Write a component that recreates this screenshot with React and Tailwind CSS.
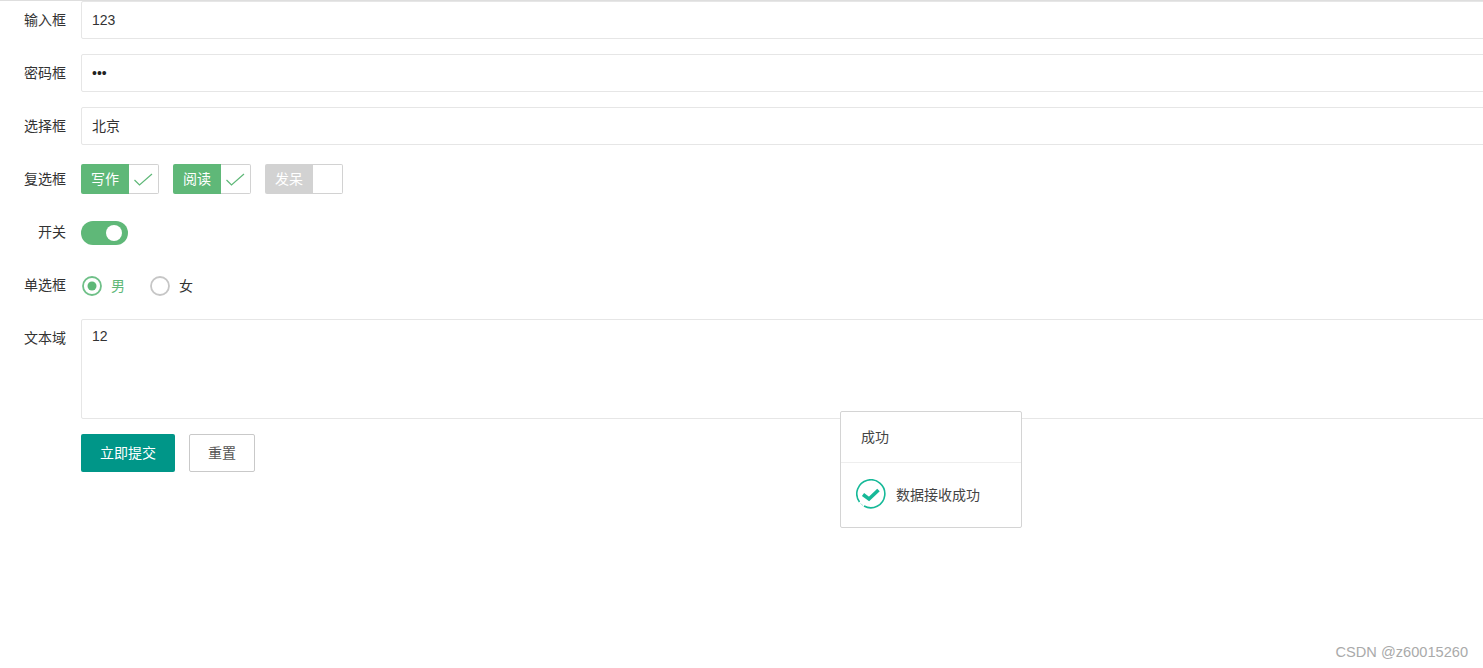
import React from "react";

const font = "font-['Liberation_Sans','Noto_Sans_CJK_SC',sans-serif]";

function Row({ label, children, h = "h-[38px]" }) {
  return (
    <div className={`flex ${h}`}>
      <div className="w-[81px] shrink-0 pr-[15px] text-right text-sm leading-[38px] text-[#333]">{label}</div>
      {children}
    </div>
  );
}

function Field({ children }) {
  return (
    <div className="h-[38px] w-[1420px] shrink-0 rounded-[2px] border border-[#e6e6e6] bg-white pl-[10px] text-sm leading-[36px] text-[#333]">
      {children}
    </div>
  );
}

function Check({ label, checked = true }) {
  return (
    <div className="flex h-[30px] w-[78px] bg-white">
      <div className={`flex h-[30px] w-[48px] shrink-0 items-center justify-center rounded-l-[2px] text-sm ${checked ? "bg-[#5fb878]" : "bg-[#d2d2d2]"} text-white`}>
        {label}
      </div>
      <div className="flex h-[30px] flex-1 items-center justify-center rounded-r-[2px] border border-l-0 border-[#d2d2d2] pr-[2px]">
        {checked && (
          <svg width="20" height="16" viewBox="0 0 20 16" fill="none">
            <path d="M1.5 9 L6.5 14 L19 3" stroke="#5fb878" strokeWidth="1.2" />
          </svg>
        )}
      </div>
    </div>
  );
}

function Radio({ checked, label }) {
  const color = checked ? "#6fc088" : "#c6c6c6";
  return (
    <div className="flex items-center gap-[9px]">
      <svg width="20" height="20" viewBox="0 0 20 20" fill="none" className="shrink-0">
        <circle cx="10" cy="10" r="9" stroke={color} strokeWidth="1.8" />
        {checked && <circle cx="10" cy="10" r="4.5" fill="#5fb878" />}
      </svg>
      <span className={`text-sm ${checked ? "text-[#5fb878]" : "text-[#333]"}`}>{label}</span>
    </div>
  );
}

export default function App() {
  return (
    <div className={`relative h-[668px] w-full overflow-hidden bg-white ${font}`}>
      <div className="flex flex-col gap-[15px] border-t border-[#dedede]">
        <Row label="输入框"><Field>123</Field></Row>
        <Row label="密码框">
          <Field>
            <span className="text-sm text-[#222]">•••</span>
          </Field>
        </Row>
        <Row label="选择框"><Field>北京</Field></Row>
        <Row label="复选框">
          <div className="flex items-center gap-[14px]">
            <Check label="写作" />
            <Check label="阅读" />
            <Check label="发呆" checked={false} />
          </div>
        </Row>
        <Row label="开关">
          <div className="flex items-center pt-[2px]">
            <div className="flex h-[24px] w-[47px] items-center justify-end rounded-full bg-[#5fb878] pr-[6px]">
              <div className="h-4 w-4 rounded-full bg-white" />
            </div>
          </div>
        </Row>
        <Row label="单选框">
          <div className="ml-px flex items-center gap-[25px] pt-[2px]">
            <Radio checked label="男" />
            <Radio label="女" />
          </div>
        </Row>
        <Row label="文本域" h="h-[100px]">
          <div className="h-[100px] w-[1420px] shrink-0 rounded-[2px] border border-[#e6e6e6] bg-white py-[6px] pl-[10px] text-sm leading-5 text-[#333]">
            12
          </div>
        </Row>
        <div className="flex h-[38px] gap-[14px] pl-[81px]">
          <button className="h-[38px] w-[94px] rounded-[2px] bg-[#009688] text-sm text-white">立即提交</button>
          <button className="h-[38px] w-[66px] rounded-[2px] border border-[#c9c9c9] bg-white text-sm text-[#555]">重置</button>
        </div>
      </div>

      <div className="absolute left-[840px] top-[411px] h-[117px] w-[182px] rounded-[2px] border border-[#d4d4d4] bg-white">
        <div className="h-[51px] border-b border-[#eeeeee] pl-5 text-sm leading-[50px] text-[#444]">成功</div>
        <div className="flex items-center gap-[10px] pl-[15px] pt-4">
          <svg width="30" height="30" viewBox="0 0 30 30" fill="none" className="shrink-0">
            <path d="M8 27 A14 14 0 1 0 3.5 23" stroke="#16b998" strokeWidth="1.6" />
            <path d="M4.5 24.5 A14 14 0 0 0 7 26.5" stroke="#9fe3d5" strokeWidth="1" />
            <path d="M7 15.5 L13 20 L22.5 11" stroke="#16b998" strokeWidth="3.6" />
          </svg>
          <span className="pt-px text-sm text-[#444]">数据接收成功</span>
        </div>
      </div>

      <div className="absolute right-[15px] top-[642px] text-[14.6px] leading-5 text-[#aaa]">CSDN @z60015260</div>
    </div>
  );
}
